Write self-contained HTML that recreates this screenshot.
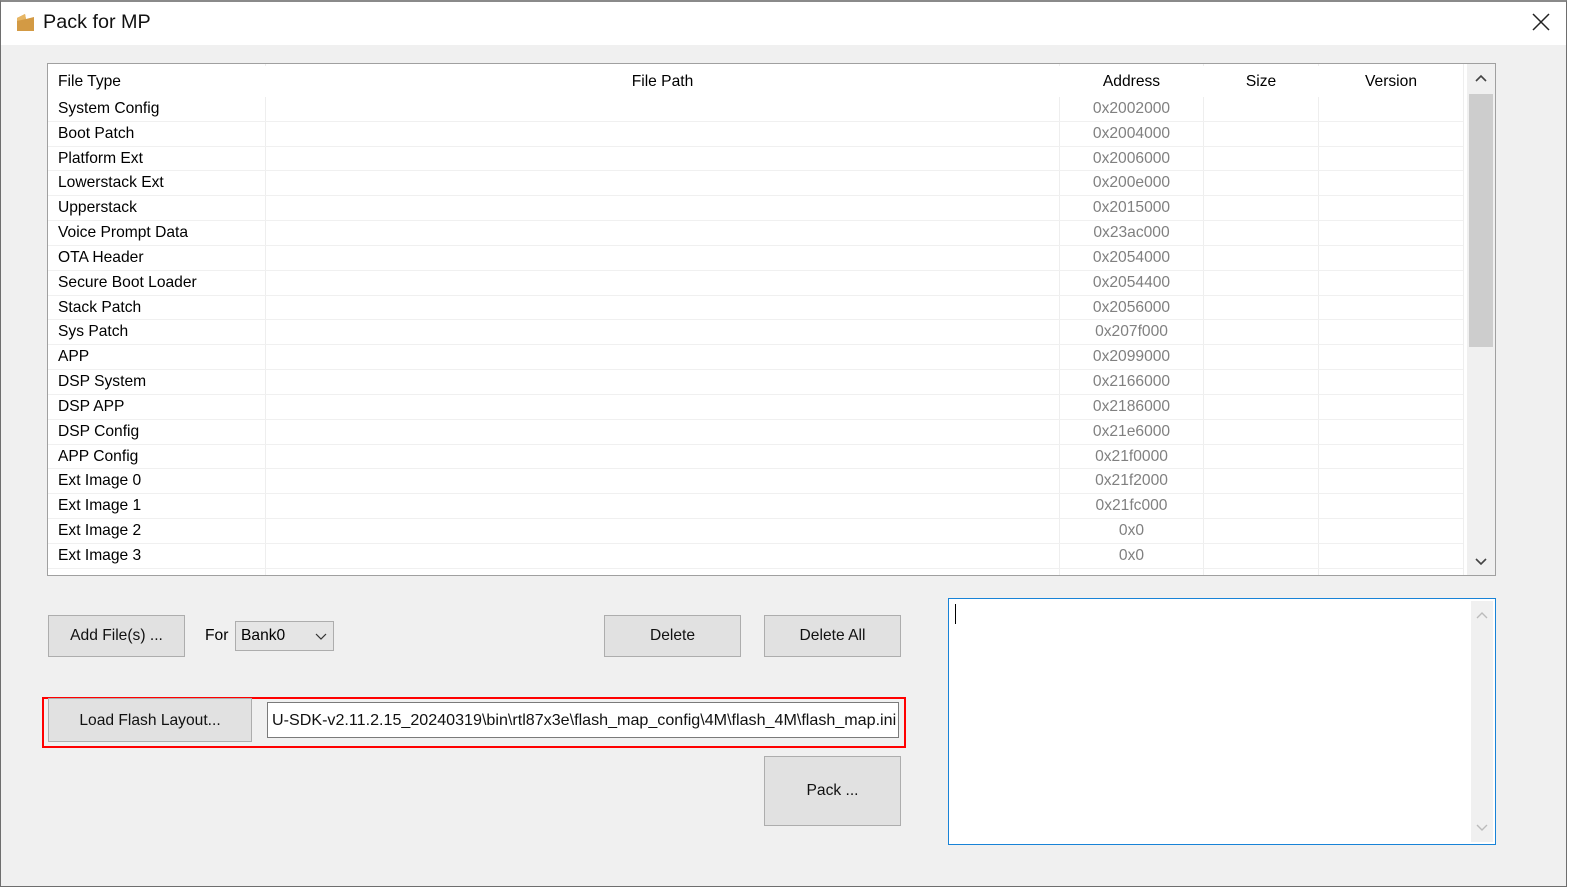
<!DOCTYPE html>
<html><head><meta charset="utf-8"><style>
*{box-sizing:border-box;margin:0;padding:0}
body{width:1577px;height:889px;background:#fff;font-family:"Liberation Sans",sans-serif;font-size:15.6px;color:#000;position:relative;overflow:hidden}
.win{position:absolute;left:0;top:0;width:1567px;height:887px;border:1px solid #6e6e6e;border-top:2px solid #8a8a8a;background:#f0f0f0}
.title{position:absolute;left:0;top:0;width:100%;height:43px;background:#fff}
.title span{position:absolute;left:42px;top:9px;font-size:19.8px;color:#111}
.x{position:absolute;right:16px;top:11px}
.tbl{position:absolute;left:46px;top:61px;width:1449px;height:513px;border:1px solid #a0a0a0;background:#fff;overflow:hidden}
.hdr{position:absolute;top:2px;left:0;height:31px;width:1415px}
.hdr div,.row div{position:absolute;top:0;height:100%;line-height:32px}
.row{position:absolute;left:0;width:1415px;height:24.83px;border-bottom:1px solid #f0f0f0}
.row div{line-height:24px}
.c1{left:10px}
.c3{left:1012px;width:143px;text-align:center;color:#808080}
.vl{position:absolute;top:0;bottom:0;width:1px;background:#eee}
.sb{position:absolute;right:0;top:0;width:29px;height:100%;background:#f0f0f0;border-left:1px solid #fff}
.thumb{position:absolute;left:2px;right:2px;top:30px;height:253px;background:#cdcdcd}
.btn{position:absolute;background:#e1e1e1;border:1px solid #adadad;text-align:center;color:#111}
.red{position:absolute;left:41px;top:695px;width:864px;height:51px;border:2px solid #f00}
</style></head><body>
<div class="win">
<div class="title">
<svg style="position:absolute;left:15px;top:10px" width="19" height="21" viewBox="0 0 19 21"><path d="M1 6 L9 2 L10 7 L18 5 L18 19 L1 19 Z" fill="#d39a44"/><path d="M1 6 L9 2 L10 7 L1 9Z" fill="#e7b664"/></svg>
<span>Pack for MP</span>
<svg class="x" width="18" height="18" viewBox="0 0 18 18"><path d="M1 1L17 17M17 1L1 17" stroke="#222" stroke-width="1.5"/></svg>
</div>
<div class="tbl">
<div class="vl" style="left:217px"></div><div class="vl" style="left:1011px"></div><div class="vl" style="left:1155px"></div><div class="vl" style="left:1270px"></div><div class="vl" style="left:1415px"></div>
<div class="hdr" style="background:#fff">
<div class="c1">File Type</div><div style="left:218px;width:793px;text-align:center">File Path</div><div style="left:1012px;width:143px;text-align:center">Address</div><div style="left:1156px;width:114px;text-align:center">Size</div><div style="left:1271px;width:144px;text-align:center">Version</div>
</div>
<div class="row" style="top:33px"><div class="c1">System Config</div><div class="c3">0x2002000</div></div>
<div class="row" style="top:57.83px"><div class="c1">Boot Patch</div><div class="c3">0x2004000</div></div>
<div class="row" style="top:82.66px"><div class="c1">Platform Ext</div><div class="c3">0x2006000</div></div>
<div class="row" style="top:107.49px"><div class="c1">Lowerstack Ext</div><div class="c3">0x200e000</div></div>
<div class="row" style="top:132.32px"><div class="c1">Upperstack</div><div class="c3">0x2015000</div></div>
<div class="row" style="top:157.15px"><div class="c1">Voice Prompt Data</div><div class="c3">0x23ac000</div></div>
<div class="row" style="top:181.98px"><div class="c1">OTA Header</div><div class="c3">0x2054000</div></div>
<div class="row" style="top:206.81px"><div class="c1">Secure Boot Loader</div><div class="c3">0x2054400</div></div>
<div class="row" style="top:231.64px"><div class="c1">Stack Patch</div><div class="c3">0x2056000</div></div>
<div class="row" style="top:256.47px"><div class="c1">Sys Patch</div><div class="c3">0x207f000</div></div>
<div class="row" style="top:281.3px"><div class="c1">APP</div><div class="c3">0x2099000</div></div>
<div class="row" style="top:306.13px"><div class="c1">DSP System</div><div class="c3">0x2166000</div></div>
<div class="row" style="top:330.96px"><div class="c1">DSP APP</div><div class="c3">0x2186000</div></div>
<div class="row" style="top:355.79px"><div class="c1">DSP Config</div><div class="c3">0x21e6000</div></div>
<div class="row" style="top:380.62px"><div class="c1">APP Config</div><div class="c3">0x21f0000</div></div>
<div class="row" style="top:405.45px"><div class="c1">Ext Image 0</div><div class="c3">0x21f2000</div></div>
<div class="row" style="top:430.28px"><div class="c1">Ext Image 1</div><div class="c3">0x21fc000</div></div>
<div class="row" style="top:455.11px"><div class="c1">Ext Image 2</div><div class="c3">0x0</div></div>
<div class="row" style="top:479.94px"><div class="c1">Ext Image 3</div><div class="c3">0x0</div></div>
<div class="sb"><div class="thumb"></div>
<svg style="position:absolute;left:8px;top:10px" width="12" height="8"><path d="M1 7L6 2L11 7" stroke="#444" stroke-width="1.6" fill="none"/></svg>
<svg style="position:absolute;left:8px;bottom:9px" width="12" height="8"><path d="M1 1L6 6L11 1" stroke="#444" stroke-width="1.6" fill="none"/></svg>
</div>
</div>
<div class="btn" style="left:47px;top:613px;width:137px;height:42px;line-height:40px">Add File(s) ...</div>
<div style="position:absolute;left:204px;top:625px">For</div>
<div style="position:absolute;left:234px;top:619px;width:99px;height:30px;border:1px solid #adadad;background:#e5e5e5;line-height:28px;padding-left:5px">Bank0
<svg style="position:absolute;right:6px;top:11px" width="12" height="7"><path d="M1 1L6 6L11 1" stroke="#333" stroke-width="1.2" fill="none"/></svg></div>
<div class="btn" style="left:603px;top:613px;width:137px;height:42px;line-height:40px">Delete</div>
<div class="btn" style="left:763px;top:613px;width:137px;height:42px;line-height:40px">Delete All</div>
<div class="red"></div>
<div class="btn" style="left:47px;top:696px;width:204px;height:44px;line-height:44px">Load Flash Layout...</div>
<div style="position:absolute;left:266px;top:700px;width:632px;height:36px;border:1px solid #7a7a7a;background:#fff;overflow:hidden;line-height:34px;padding-left:4px;white-space:nowrap;color:#111;font-size:16.1px">U-SDK-v2.11.2.15_20240319\bin\rtl87x3e\flash_map_config\4M\flash_4M\flash_map.ini</div>
<div class="btn" style="left:763px;top:754px;width:137px;height:70px;line-height:68px">Pack ...</div>
<div style="position:absolute;left:947px;top:596px;width:548px;height:247px;border:1px solid #1883d7;background:#fff">
<div style="position:absolute;left:6px;top:5px;width:1px;height:20px;background:#000"></div>
<div style="position:absolute;right:2px;top:2px;width:22px;bottom:2px;background:#f0f0f0">
<svg style="position:absolute;left:5px;top:10px" width="12" height="8"><path d="M1 7L6 2L11 7" stroke="#bbb" stroke-width="1.4" fill="none"/></svg>
<svg style="position:absolute;left:5px;bottom:10px" width="12" height="8"><path d="M1 1L6 6L11 1" stroke="#bbb" stroke-width="1.4" fill="none"/></svg>
</div></div>
</div>
</body></html>
